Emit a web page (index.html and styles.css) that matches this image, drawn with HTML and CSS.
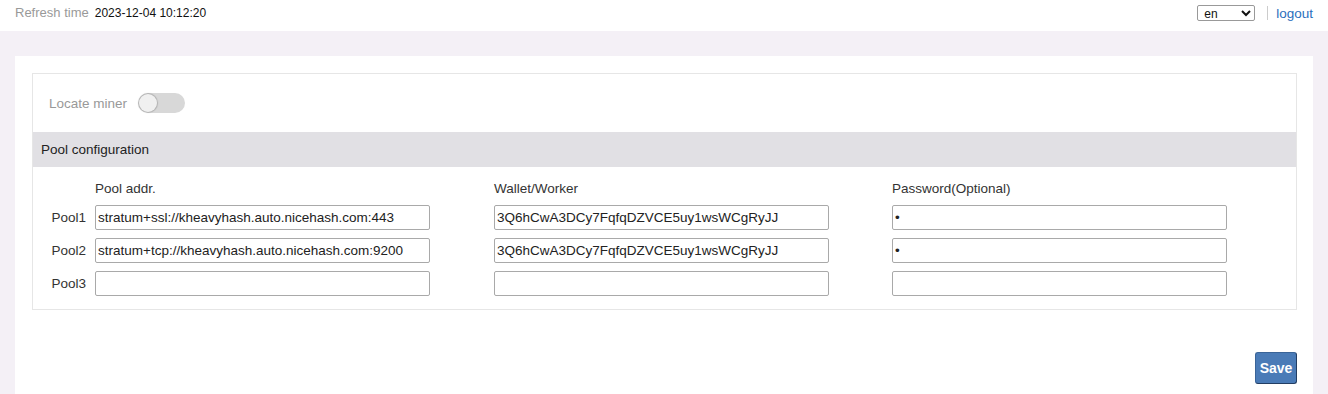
FILE: index.html
```html
<!DOCTYPE html>
<html lang="en">
<head>
<meta charset="utf-8">
<title>Pool configuration</title>
<link rel="stylesheet" href="styles.css">
</head>
<body>
<header class="topbar">
  <div class="refresh">
    <span class="refresh-label">Refresh time</span>
    <span class="refresh-value">2023-12-04 10:12:20</span>
  </div>
  <div class="top-right">
    <select class="lang">
      <option>en</option>
    </select>
    <span class="sep"></span>
    <a class="logout" href="#">logout</a>
  </div>
</header>
<main class="page">
  <section class="card">
    <div class="panel">
      <div class="locate">
        <span class="locate-label">Locate miner</span>
        <span class="toggle"><span class="knob"></span></span>
      </div>
      <div class="section-title">Pool configuration</div>
      <div class="pool-grid">
        <div></div>
        <div class="col-label">Pool addr.</div>
        <div class="col-label">Wallet/Worker</div>
        <div class="col-label">Password(Optional)</div>

        <div class="row-label">Pool1</div>
        <div><input class="field" type="text" value="stratum+ssl://kheavyhash.auto.nicehash.com:443"></div>
        <div><input class="field" type="text" value="3Q6hCwA3DCy7FqfqDZVCE5uy1wsWCgRyJJ"></div>
        <div><input class="field" type="password" value="x"></div>

        <div class="row-label">Pool2</div>
        <div><input class="field" type="text" value="stratum+tcp://kheavyhash.auto.nicehash.com:9200"></div>
        <div><input class="field" type="text" value="3Q6hCwA3DCy7FqfqDZVCE5uy1wsWCgRyJJ"></div>
        <div><input class="field" type="password" value="x"></div>

        <div class="row-label">Pool3</div>
        <div><input class="field" type="text" value=""></div>
        <div><input class="field" type="text" value=""></div>
        <div><input class="field" type="password" value=""></div>
      </div>
    </div>
    <div class="actions">
      <button class="save" type="button">Save</button>
    </div>
  </section>
</main>
</body>
</html>
```
FILE: styles.css
```css
html, body {
  margin: 0;
  padding: 0;
}
body {
  font-family: "Liberation Sans", Arial, Helvetica, sans-serif;
  font-size: 13.5px;
  color: #222;
  background: #f4f0f6;
  height: 394px;
  overflow: hidden;
}
.topbar {
  height: 31px;
  background: #fff;
  display: flex;
  justify-content: space-between;
  align-items: flex-start;
  padding: 0 15px;
  box-sizing: border-box;
}
.refresh {
  padding-top: 5px;
  display: flex;
  align-items: baseline;
  gap: 6px;
}
.refresh-label {
  color: #999;
  font-size: 13px;
}
.refresh-value {
  color: #111;
  font-size: 12px;
}
.top-right {
  display: flex;
  align-items: center;
  padding-top: 5px;
}
.lang {
  width: 58px;
  height: 16px;
  font-family: "Liberation Sans", Arial, sans-serif;
  font-size: 12px;
  padding: 0 0 0 2px;
  border: 1px solid #999;
  border-radius: 2px;
  background: #fff;
  color: #111;
}
.sep {
  width: 1px;
  height: 14px;
  background: #ccc;
  margin: 0 8px 0 12px;
}
.logout {
  color: #2a6fbd;
  text-decoration: none;
  font-size: 13.5px;
}
.page {
  padding: 25px 15px 0 15px;
}
.card {
  background: #fff;
  padding: 17px 16px 12px 17px;
}
.panel {
  border: 1px solid #e6e6e6;
}
.locate {
  height: 58px;
  display: flex;
  align-items: center;
  padding-left: 16px;
}
.locate-label {
  color: #999;
}
.toggle {
  width: 47px;
  height: 20px;
  border-radius: 10px;
  background: #d8d8d8;
  margin-left: 11px;
  position: relative;
  display: inline-block;
}
.knob {
  position: absolute;
  left: 1px;
  top: 1px;
  width: 18px;
  height: 18px;
  border-radius: 50%;
  background: #f0f0f0;
  box-shadow: 0 0 1px 1px rgba(0,0,0,0.18);
}
.section-title {
  background: #e1e0e4;
  height: 35px;
  line-height: 35px;
  padding-left: 8px;
  color: #222;
}
.pool-grid {
  display: grid;
  grid-template-columns: 62px 399px 398px 1fr;
  grid-template-rows: 17px 25px 25px 25px;
  row-gap: 8px;
  padding: 13px 0 13px 0;
  align-items: center;
}
.col-label {
  color: #333;
  line-height: 17px;
  align-self: start;
}
.row-label {
  text-align: right;
  padding-right: 9px;
  color: #333;
}
.field {
  box-sizing: border-box;
  width: 335px;
  height: 25px;
  border: 1px solid #a9a9a9;
  border-radius: 2px;
  padding: 0 2px;
  font-family: "Liberation Sans", Arial, sans-serif;
  font-size: 13.5px;
  color: #222;
  display: block;
  margin: 0;
}
.actions {
  display: flex;
  justify-content: flex-end;
  margin-top: 42px;
}
.save {
  width: 42px;
  height: 32px;
  background: #4a7bb7;
  color: #fff;
  font-family: "Liberation Sans", Arial, sans-serif;
  font-weight: bold;
  font-size: 14px;
  border: 1px solid #3a6498;
  border-right-color: #233e63;
  border-bottom-color: #233e63;
  border-radius: 3px;
  padding: 0;
}
```
